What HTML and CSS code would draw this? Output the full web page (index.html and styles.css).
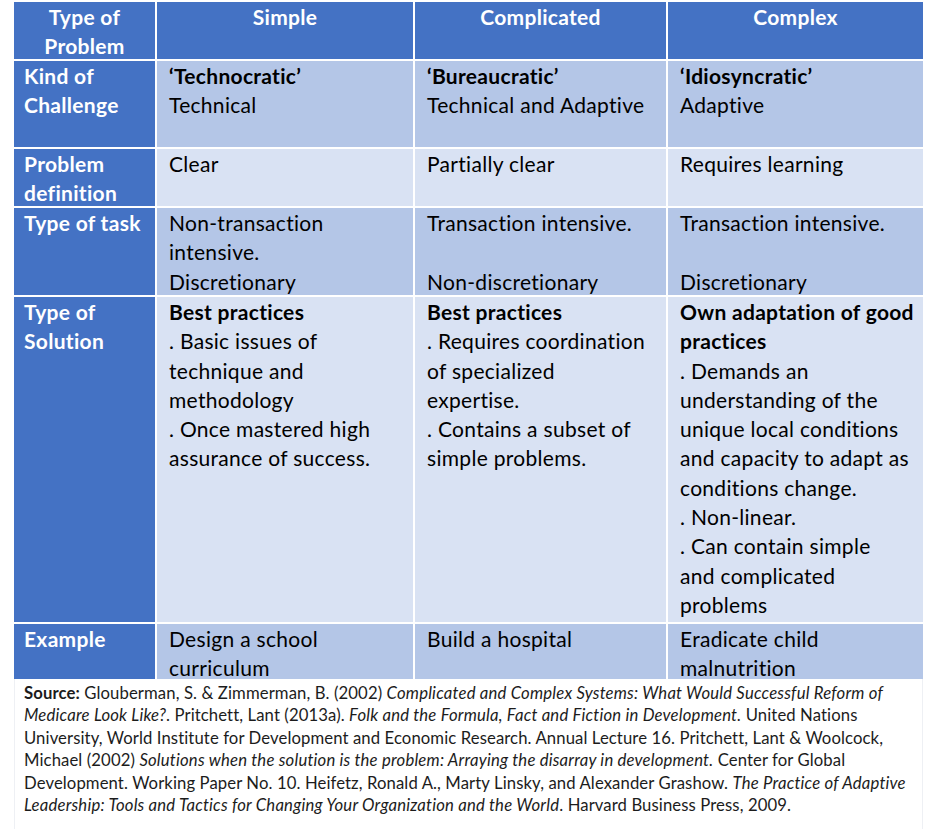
FILE: index.html
```html
<!DOCTYPE html>
<html lang="en">
<head>
<meta charset="utf-8">
<title>Types of Problem</title>
<link rel="stylesheet" href="styles.css">
</head>
<body>
<div class="page">
  <div class="grid">
    <div class="cell hd label center">Type of<br>Problem</div>
    <div class="cell hd center">Simple</div>
    <div class="cell hd center">Complicated</div>
    <div class="cell hd center">Complex</div>

    <div class="cell label">Kind of<br>Challenge</div>
    <div class="cell dark"><b>‘Technocratic’</b><br>Technical</div>
    <div class="cell dark"><b>‘Bureaucratic’</b><br>Technical and Adaptive</div>
    <div class="cell dark"><b>‘Idiosyncratic’</b><br>Adaptive</div>

    <div class="cell label">Problem<br>definition</div>
    <div class="cell light">Clear</div>
    <div class="cell light">Partially clear</div>
    <div class="cell light">Requires learning</div>

    <div class="cell label">Type of task</div>
    <div class="cell dark">Non-transaction<br>intensive.<br>Discretionary</div>
    <div class="cell dark">Transaction intensive.<br><br>Non-discretionary</div>
    <div class="cell dark">Transaction intensive.<br><br>Discretionary</div>

    <div class="cell label">Type of<br>Solution</div>
    <div class="cell light"><b>Best practices</b><br>. Basic issues of<br>technique and<br>methodology<br>. Once mastered high<br>assurance of success.</div>
    <div class="cell light"><b>Best practices</b><br>. Requires coordination<br>of specialized<br>expertise.<br>. Contains a subset of<br>simple problems.</div>
    <div class="cell light"><b>Own adaptation of good<br>practices</b><br>. Demands an<br>understanding of the<br>unique local conditions<br>and capacity to adapt as<br>conditions change.<br>. Non-linear.<br>. Can contain simple<br>and complicated<br>problems</div>

    <div class="cell label">Example</div>
    <div class="cell dark">Design a school<br>curriculum</div>
    <div class="cell dark">Build a hospital</div>
    <div class="cell dark">Eradicate child<br>malnutrition</div>
  </div>
  <p class="source"><b>Source:</b> Glouberman, S. &amp; Zimmerman, B. (2002) <i>Complicated and Complex Systems: What Would Successful Reform of<br>Medicare Look Like?</i>. Pritchett, Lant (2013a). <i>Folk and the Formula, Fact and Fiction in Development.</i> United Nations<br>University, World Institute for Development and Economic Research. Annual Lecture 16. Pritchett, Lant &amp; Woolcock,<br>Michael (2002) <i>Solutions when the solution is the problem: Arraying the disarray in development.</i> Center for Global<br>Development. Working Paper No. 10. Heifetz, Ronald A., Marty Linsky, and Alexander Grashow. <i>The Practice of Adaptive<br>Leadership: Tools and Tactics for Changing Your Organization and the World</i>. Harvard Business Press, 2009.</p>
</div>
</body>
</html>
```

FILE: styles.css
```css
html, body {
  margin: 0;
  padding: 0;
  background: #ffffff;
}

.page {
  padding: 2px 4px 0 14px;
  font-family: Lato, "Open Sans", "Liberation Sans", sans-serif;
}

.grid {
  display: grid;
  grid-template-columns: 141px 256px 251px 255px;
  grid-template-rows: 57px 86px 57px 87px 325px 55px;
  column-gap: 2px;
  row-gap: 2px;
  width: 909px;
}

.cell {
  font-size: 21px;
  line-height: 29.3px;
  letter-spacing: 0.3px;
  color: #000;
  padding: 0 4px 0 12px;
  white-space: nowrap;
  overflow: hidden;
}

.cell b {
  font-weight: 700;
}

.hd {
  background: #4472c4;
  color: #fff;
  font-weight: 700;
}

.label {
  background: #4472c4;
  color: #fff;
  font-weight: 700;
  padding-left: 10px;
}

.center {
  text-align: center;
  padding: 0;
}

.dark {
  background: #b4c6e7;
}

.light {
  background: #d9e2f3;
}

.source {
  margin: 0;
  width: 909px;
  box-sizing: border-box;
  padding: 3px 4px 10px 9px;
  font-size: 16.7px;
  line-height: 22.4px;
  letter-spacing: 0.1px;
  color: #1c1c1c;
  border-left: 1px solid #eef0f4;
  border-right: 1px solid #eef0f4;
  min-height: 150px;
  white-space: nowrap;
}

.source i {
  letter-spacing: 0.2px;
}
```
